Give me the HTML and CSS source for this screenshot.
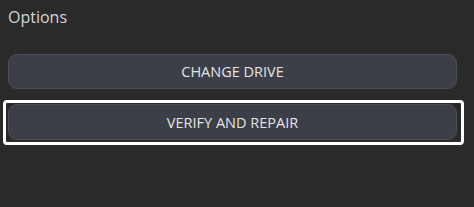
FILE: index.html
```html
<!DOCTYPE html>
<html lang="en">
<head>
    <meta charset="UTF-8">
    <title>Options</title>
    <link rel="stylesheet" href="styles.css">
</head>
<body>
<div class="panel">
    <div class="title">Options</div>
    <div class="actions">
        <div class="button">CHANGE DRIVE</div>
        <div class="focus-ring">
            <div class="button">VERIFY AND REPAIR</div>
        </div>
    </div>
</div>
</body>
</html>
```

FILE: styles.css
```css
body {
    margin: 0;
    background-color: #2a2a2a;
    font-family: "Open Sans", "Noto Sans", sans-serif;
    color: #dcdcdc;
}
.panel {
    padding: 6px 17px 0 8px;
}
.title {
    font-size: 16px;
    line-height: 22px;
    color: #d6d6d6;
}
.actions {
    display: flex;
    flex-direction: column;
    gap: 11px;
    margin-top: 26px;
}
.button {
    box-sizing: border-box;
    height: 35px;
    display: flex;
    align-items: center;
    justify-content: center;
    font-size: 14.5px;
    color: #e4e4e4;
    background-color: #3c3e48;
    border: 1px solid #4b4d57;
    border-radius: 9px;
}
.focus-ring {
    margin: 0 -7px 0 -5px;
    padding: 1px 4px 2px 2px;
    border: 3px solid #ffffff;
    border-radius: 4px;
}
.focus-ring .button {
    height: 36px;
}
```
